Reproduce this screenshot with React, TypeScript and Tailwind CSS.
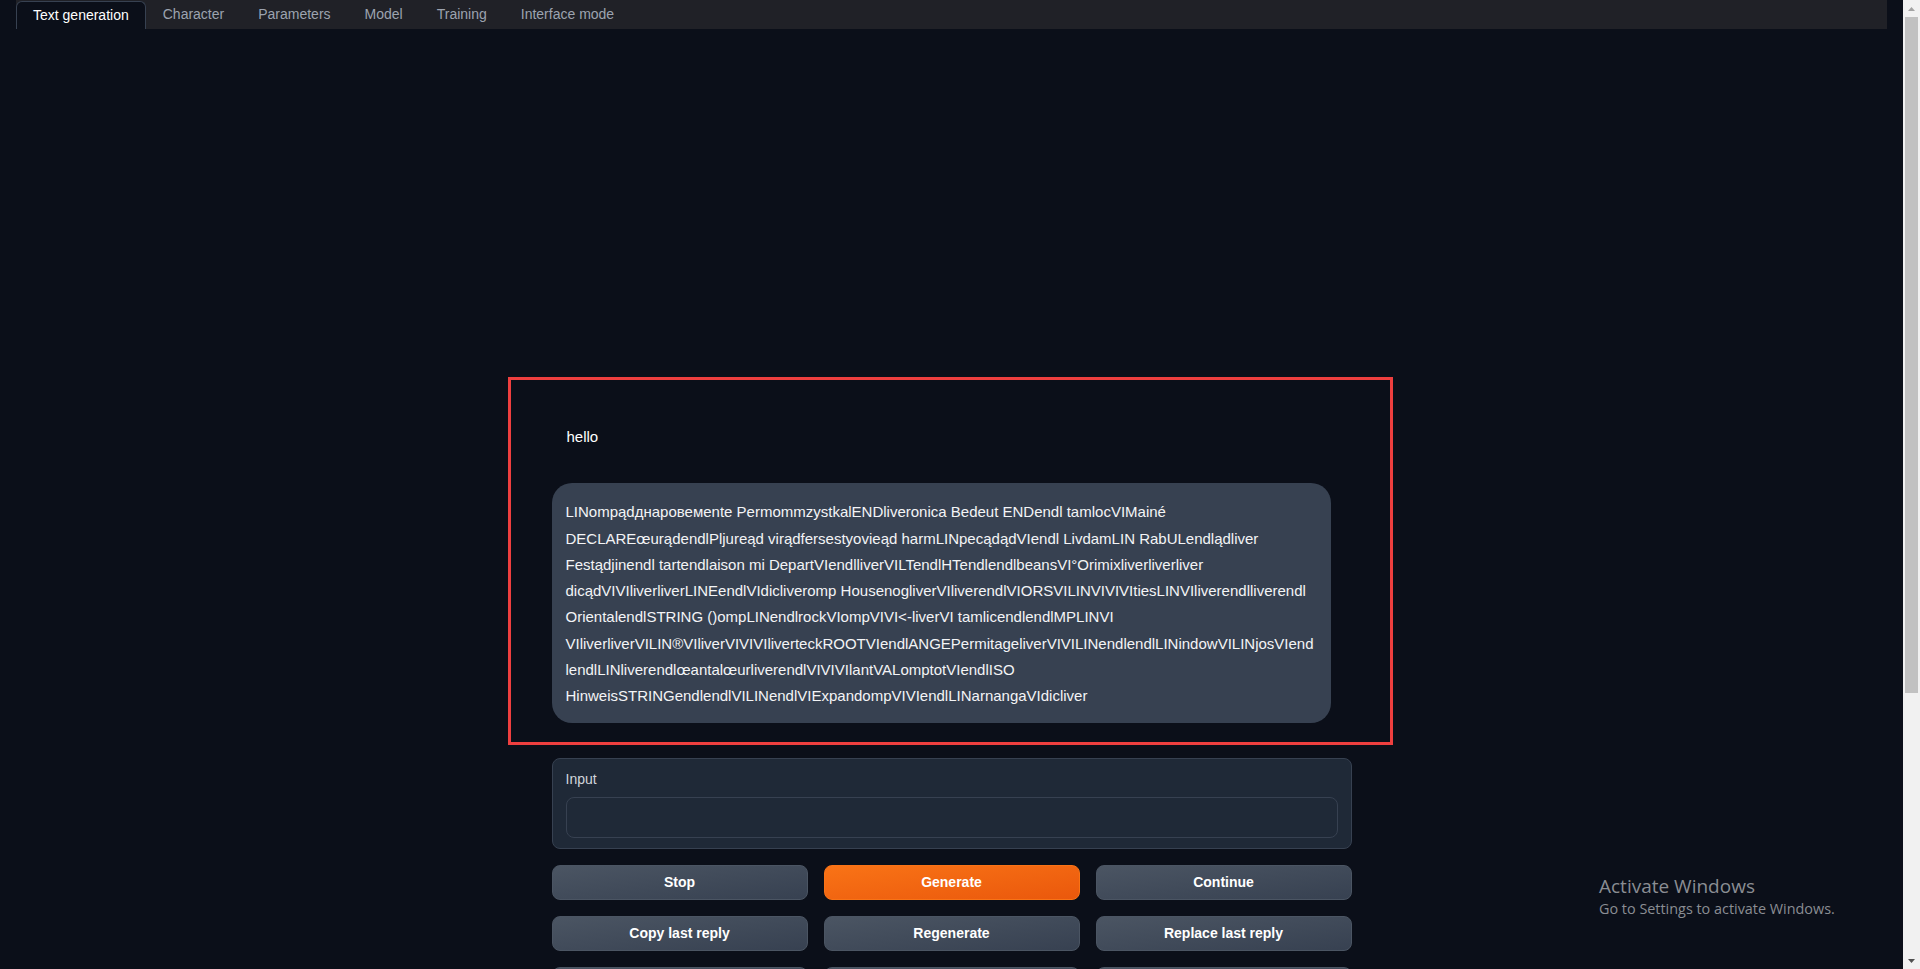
import React from "react";

const tabs = ["Text generation", "Character", "Parameters", "Model", "Training", "Interface mode"];

const botLines = [
  "LINompądднаровемente PermommzystkalENDliveronica Bedeut ENDendl tamlocVIMainé",
  "DECLAREœurądendlPljureąd virądfersestyovieąd harmLINpecądądVIendl LivdamLIN RabULendlądliver",
  "Festądjinendl tartendlaison mi DepartVIendlliverVILTendlHTendlendlbeansVI°Orimixliverliverliver",
  "dicądVIVIliverliverLINEendlVIdicliveromp HousenogliverVIliverendlVIORSVILINVIVIVItiesLINVIliverendlliverendl",
  "OrientalendlSTRING ()ompLINendlrockVIompVIVI<-liverVI tamlicendlendlMPLINVI",
  "VIliverliverVILIN®VIliverVIVIVIliverteckROOTVIendlANGEPermitageliverVIVILINendlendlLINindowVILINjosVIend",
  "lendlLINliverendlœantalœurliverendlVIVIVIlantVALomptotVIendlISO",
  "HinweisSTRINGendlendlVILINendlVIExpandompVIVIendlLINarnangaVIdicliver",
];

const buttonRows = [
  ["Stop", "Generate", "Continue"],
  ["Copy last reply", "Regenerate", "Replace last reply"],
  ["", "", ""],
];

function Btn({ label }: { label: string }) {
  const primary = label === "Generate";
  return (
    <button
      className={
        primary
          ? "h-[35px] rounded-lg border border-[#f97316] bg-linear-to-br from-[#f97316] to-[#ea580c] text-[14px] font-bold text-white"
          : "h-[35px] rounded-lg border border-[#4b5563] bg-linear-to-br from-[#4b5563] to-[#374151] text-[14px] font-bold text-white"
      }
    >
      {label}
    </button>
  );
}

export default function App() {
  return (
    <div className="relative flex h-[969px] w-full overflow-hidden bg-[#0b0f19] font-['Liberation_Sans',Arial,sans-serif]">
      <div className="flex min-w-0 flex-1 flex-col px-4">
        <nav className="flex h-[29px] shrink-0 bg-[#202127]">
          {tabs.map((t, i) =>
            i === 0 ? (
              <div
                key={t}
                className="mt-px flex h-[28px] items-center rounded-t-[6px] border border-b-0 border-[#374151] bg-[#0b0f19] px-4 text-[14px] text-white"
              >
                {t}
              </div>
            ) : (
              <div key={t} className="flex h-[29px] items-center px-[17px] text-[14px] text-[#9ca3af]">
                {t}
              </div>
            )
          )}
        </nav>

        <div className="flex flex-col items-center">
          <div className="mt-[348px] w-[885px] -translate-x-px border-[3px] border-[#ef3f3f] pt-[28px] pb-[19px]">
            <div className="mx-auto flex w-[800px] flex-col gap-[19px] pl-px">
              <div className="px-[15px] pt-4 pb-[14px] text-[15px] leading-[26.25px] text-white">hello</div>
              <div className="w-[779px] rounded-[20px] bg-[#374151] px-[14px] pt-4 pb-[14px] text-[15px] leading-[26.25px] text-[#f3f4f6] whitespace-nowrap">
                {botLines.map((l, i) => (
                  <div key={i}>{l}</div>
                ))}
              </div>
            </div>
          </div>

          <div className="mt-[13px] w-[800px] rounded-lg border border-[#374151] bg-[#1f2937] px-[13px] pt-[10px] pb-[10px]">
            <div className="text-[14px] leading-[20px] text-[#d1d5db]">Input</div>
            <textarea className="mt-2 block h-[41px] w-full resize-none rounded-lg border border-[#374151] bg-[#1f2937] outline-none" />
          </div>

          <div className="mt-[16px] flex w-[800px] flex-col gap-4">
            {buttonRows.map((row, i) => (
              <div key={i} className="grid grid-cols-3 gap-4">
                {row.map((b, j) => (
                  <Btn key={j} label={b} />
                ))}
              </div>
            ))}
          </div>
        </div>
      </div>

      <div className="flex w-[17px] shrink-0 flex-col bg-[#f1f1f1]">
        <div className="flex h-[17px] items-center justify-center">
          <svg width="7" height="4" viewBox="0 0 7 4">
            <polygon points="3.5,0 7,4 0,4" fill="#a3a3a3" />
          </svg>
        </div>
        <div className="mx-[2px] h-[676px] bg-[#c1c1c1]" />
        <div className="flex-1" />
        <div className="flex h-[17px] items-center justify-center">
          <svg width="7" height="4" viewBox="0 0 7 4">
            <polygon points="0,0 7,0 3.5,4" fill="#505050" />
          </svg>
        </div>
      </div>

      <div className="pointer-events-none absolute left-[1599px] top-[874px] font-['Open_Sans','Noto_Sans',sans-serif] text-[#8a8d93]">
        <div className="text-[19px] leading-[24px]">Activate Windows</div>
        <div className="mt-px text-[14.4px] leading-[20px]">Go to Settings to activate Windows.</div>
      </div>
    </div>
  );
}
